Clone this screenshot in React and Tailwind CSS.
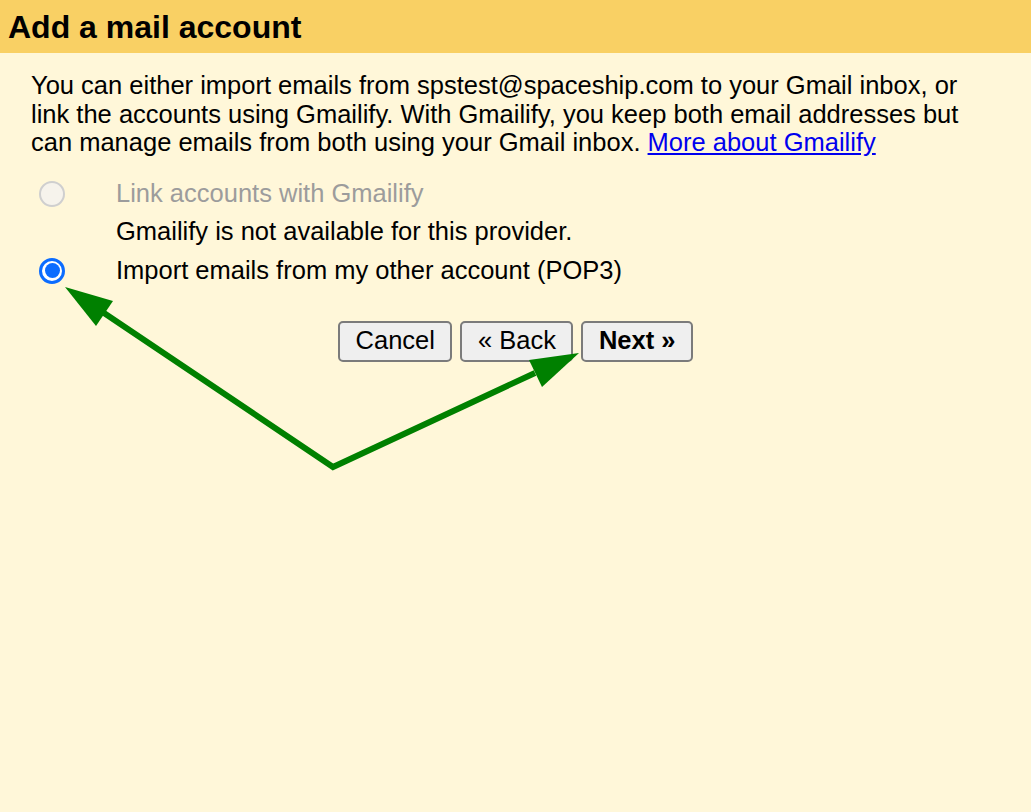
import React from 'react'

// Green arrows drawn over the dialog
function Arrows() {
  return (
    <svg className="absolute left-0 top-0 pointer-events-none" width="1031" height="812" viewBox="0 0 1031 812">
      <polyline points="104,313 333,467 535,373" fill="none" stroke="#008000" strokeWidth="6" strokeLinejoin="miter" />
      <polygon points="65,287 96,326 113,301" fill="#008000" />
      <polygon points="579,353 542,387 529,360" fill="#008000" />
    </svg>
  )
}

function Radio({ checked, disabled }) {
  if (disabled) {
    return <span className="block w-[26px] h-[26px] rounded-full border-2 border-[#cfcfcf] bg-[#f6f3ec]" />
  }
  return (
    <span className={`flex items-center justify-center w-[26px] h-[26px] rounded-full border-[3px] ${checked ? 'border-[#0b6cff] bg-white' : 'border-[#767676] bg-white'}`}>
      {checked && <span className="block w-[15px] h-[15px] rounded-full bg-[#0b6cff]" />}
    </span>
  )
}

function Button({ children, bold }) {
  return (
    <button className={`h-[41px] px-[15.5px] rounded-[5px] border-2 border-[#7b7b7b] bg-[#efefef] text-[25.5px] leading-none text-black ${bold ? 'font-bold' : ''}`}>
      {children}
    </button>
  )
}

export default function App() {
  return (
    <div className="relative w-[1031px] h-[812px] bg-[#fff7d9] overflow-hidden text-black" style={{ fontFamily: '"Liberation Sans", Arial, sans-serif' }}>
      <div className="h-[53px] bg-[#f9d064] flex items-center px-[8px]">
        <h1 className="text-[32px] font-bold leading-none">Add a mail account</h1>
      </div>

      <div className="pl-[31px] pr-[20px] pt-[18px]">
        <p className="text-[25.5px] leading-[28.5px] whitespace-nowrap">
          You can either import emails from spstest@spaceship.com to your Gmail inbox, or<br />
          link the accounts using Gmailify. With Gmailify, you keep both email addresses but<br />
          can manage emails from both using your Gmail inbox.{' '}
          <a href="#" className="text-[#0000ee] underline">More about Gmailify</a>
        </p>

        <div className="mt-[18px] text-[25.5px] leading-[29px]">
          <div className="flex items-center h-[38px]">
            <div className="w-[85px] pl-[8px]"><Radio disabled /></div>
            <span className="text-[#9c9c9c]">Link accounts with Gmailify</span>
          </div>
          <div className="flex items-center h-[38px]">
            <div className="w-[85px]" />
            <span>Gmailify is not available for this provider.</span>
          </div>
          <div className="flex items-center h-[40px]">
            <div className="w-[85px] pl-[8px]"><Radio checked /></div>
            <span>Import emails from my other account (POP3)</span>
          </div>
        </div>
      </div>

      <div className="flex justify-center gap-[8px] mt-[30px]">
        <Button>Cancel</Button>
        <Button>« Back</Button>
        <Button bold>Next »</Button>
      </div>

      <Arrows />
    </div>
  )
}
